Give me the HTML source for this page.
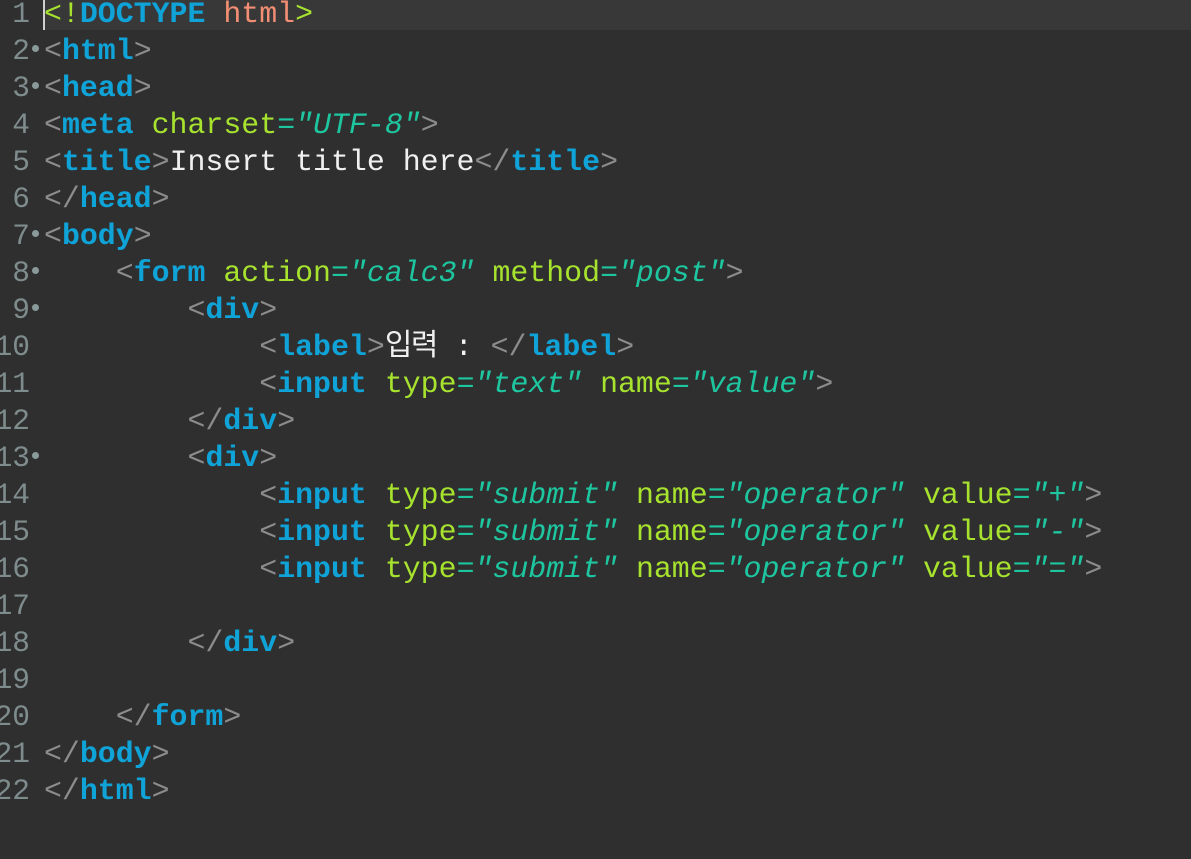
<!DOCTYPE html>
<html><head><meta charset="utf-8"><style>
body{margin:0;background:#2f2f2f;width:1191px;height:859px;overflow:hidden;font-family:"Liberation Mono","Noto Sans CJK KR",monospace;}
.hl{position:absolute;left:44px;top:0;width:1147px;height:30px;background:#383838;}
.cur{position:absolute;left:43px;top:0;width:2px;height:30px;background:#cfcfcf;}
.ln{position:absolute;left:-20px;width:50px;text-align:right;font-size:29.5px;color:#7f8c8d;height:37px;line-height:37px;}
.dot{position:absolute;left:32px;width:7px;height:7px;border-radius:50%;background:#8a9a9b;}
.c{position:absolute;left:44px;font-size:29.9px;height:37px;line-height:37px;white-space:pre;color:#f0f0f0;}
.b{color:#8c8c8c}.t{color:#0fa3d8;font-weight:bold}.a{color:#a6e22e}.s{color:#1ec6a0;font-style:italic}.e{color:#1ec6a0}.d{color:#f28e73}.g{color:#a6e22e}
.k{display:inline-block;width:26px}
</style></head><body>
<div class="hl"></div><div class="cur"></div>
<div class="ln" style="top:-4px">1</div><div class="c" style="top:-4px"><span class="g">&lt;!</span><span class="t">DOCTYPE</span> <span class="d">html</span><span class="g">&gt;</span></div>
<div class="ln" style="top:33px">2</div><div class="dot" style="top:45px"></div><div class="c" style="top:33px"><span class="b">&lt;</span><span class="t">html</span><span class="b">&gt;</span></div>
<div class="ln" style="top:70px">3</div><div class="dot" style="top:82px"></div><div class="c" style="top:70px"><span class="b">&lt;</span><span class="t">head</span><span class="b">&gt;</span></div>
<div class="ln" style="top:107px">4</div><div class="c" style="top:107px"><span class="b">&lt;</span><span class="t">meta</span> <span class="a">charset</span><span class="e">=</span><span class="s">"UTF-8"</span><span class="b">&gt;</span></div>
<div class="ln" style="top:144px">5</div><div class="c" style="top:144px"><span class="b">&lt;</span><span class="t">title</span><span class="b">&gt;</span>Insert title here<span class="b">&lt;/</span><span class="t">title</span><span class="b">&gt;</span></div>
<div class="ln" style="top:181px">6</div><div class="c" style="top:181px"><span class="b">&lt;/</span><span class="t">head</span><span class="b">&gt;</span></div>
<div class="ln" style="top:218px">7</div><div class="dot" style="top:230px"></div><div class="c" style="top:218px"><span class="b">&lt;</span><span class="t">body</span><span class="b">&gt;</span></div>
<div class="ln" style="top:255px">8</div><div class="dot" style="top:267px"></div><div class="c" style="top:255px">    <span class="b">&lt;</span><span class="t">form</span> <span class="a">action</span><span class="e">=</span><span class="s">"calc3"</span> <span class="a">method</span><span class="e">=</span><span class="s">"post"</span><span class="b">&gt;</span></div>
<div class="ln" style="top:292px">9</div><div class="dot" style="top:304px"></div><div class="c" style="top:292px">        <span class="b">&lt;</span><span class="t">div</span><span class="b">&gt;</span></div>
<div class="ln" style="top:329px">10</div><div class="c" style="top:329px">            <span class="b">&lt;</span><span class="t">label</span><span class="b">&gt;</span><span class="k">입</span><span class="k">력</span> : <span class="b">&lt;/</span><span class="t">label</span><span class="b">&gt;</span></div>
<div class="ln" style="top:366px">11</div><div class="c" style="top:366px">            <span class="b">&lt;</span><span class="t">input</span> <span class="a">type</span><span class="e">=</span><span class="s">"text"</span> <span class="a">name</span><span class="e">=</span><span class="s">"value"</span><span class="b">&gt;</span></div>
<div class="ln" style="top:403px">12</div><div class="c" style="top:403px">        <span class="b">&lt;/</span><span class="t">div</span><span class="b">&gt;</span></div>
<div class="ln" style="top:440px">13</div><div class="dot" style="top:452px"></div><div class="c" style="top:440px">        <span class="b">&lt;</span><span class="t">div</span><span class="b">&gt;</span></div>
<div class="ln" style="top:477px">14</div><div class="c" style="top:477px">            <span class="b">&lt;</span><span class="t">input</span> <span class="a">type</span><span class="e">=</span><span class="s">"submit"</span> <span class="a">name</span><span class="e">=</span><span class="s">"operator"</span> <span class="a">value</span><span class="e">=</span><span class="s">"+"</span><span class="b">&gt;</span></div>
<div class="ln" style="top:514px">15</div><div class="c" style="top:514px">            <span class="b">&lt;</span><span class="t">input</span> <span class="a">type</span><span class="e">=</span><span class="s">"submit"</span> <span class="a">name</span><span class="e">=</span><span class="s">"operator"</span> <span class="a">value</span><span class="e">=</span><span class="s">"-"</span><span class="b">&gt;</span></div>
<div class="ln" style="top:551px">16</div><div class="c" style="top:551px">            <span class="b">&lt;</span><span class="t">input</span> <span class="a">type</span><span class="e">=</span><span class="s">"submit"</span> <span class="a">name</span><span class="e">=</span><span class="s">"operator"</span> <span class="a">value</span><span class="e">=</span><span class="s">"="</span><span class="b">&gt;</span></div>
<div class="ln" style="top:588px">17</div>
<div class="ln" style="top:625px">18</div><div class="c" style="top:625px">        <span class="b">&lt;/</span><span class="t">div</span><span class="b">&gt;</span></div>
<div class="ln" style="top:662px">19</div>
<div class="ln" style="top:699px">20</div><div class="c" style="top:699px">    <span class="b">&lt;/</span><span class="t">form</span><span class="b">&gt;</span></div>
<div class="ln" style="top:736px">21</div><div class="c" style="top:736px"><span class="b">&lt;/</span><span class="t">body</span><span class="b">&gt;</span></div>
<div class="ln" style="top:773px">22</div><div class="c" style="top:773px"><span class="b">&lt;/</span><span class="t">html</span><span class="b">&gt;</span></div>
</body></html>
